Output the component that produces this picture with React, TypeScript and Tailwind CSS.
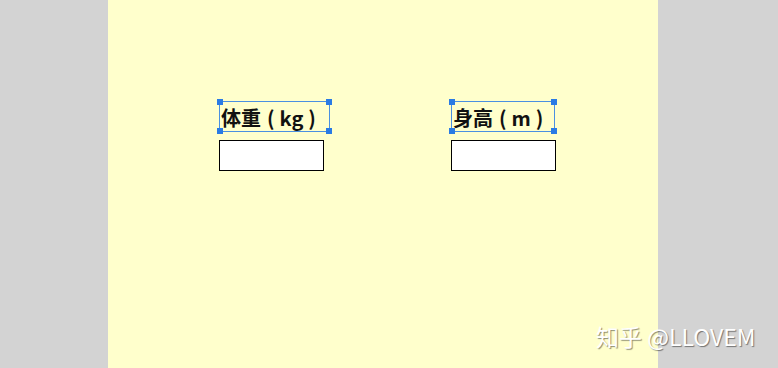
const handle = "absolute h-[6px] w-[6px] bg-[#2a7be4]"

function Field({ name, unit, labelWidth }: { name: string; unit: string; labelWidth: string }) {
  return (
    <div className="flex flex-col items-start gap-[8px]">
      <div className={`relative flex h-[31px] items-center border border-[#4a90e2] pl-[1px] pt-[2px] ${labelWidth}`}>
        <span className="flex items-center whitespace-nowrap text-[20px] font-bold leading-none text-[#111]">
          {name}
          <span className="ml-[6px] mr-[5px]">(</span>
          {unit}
          <span className="ml-[5px]">)</span>
        </span>
        <span className={`${handle} -left-[3px] -top-[3px]`} />
        <span className={`${handle} -right-[3px] -top-[3px]`} />
        <span className={`${handle} -bottom-[3px] -left-[3px]`} />
        <span className={`${handle} -bottom-[3px] -right-[3px]`} />
      </div>
      <div className="h-[31px] w-[105px] border border-black bg-white" />
    </div>
  )
}

export default function App() {
  return (
    <div
      className="relative h-[368px] w-[778px] overflow-hidden bg-[#d3d3d3]"
      style={{ fontFamily: '"Noto Sans CJK SC", "Noto Sans", sans-serif' }}
    >
      <div className="ml-[108px] h-full w-[550px] bg-[#ffffcc] pt-[101px]">
        <div className="ml-[111px] flex gap-[121px]">
          <Field name="体重" unit="kg" labelWidth="w-[111px]" />
          <Field name="身高" unit="m" labelWidth="w-[104px]" />
        </div>
      </div>
      <div className="absolute left-[596px] top-[319px] whitespace-nowrap text-[23px] text-white [text-shadow:1px_1px_1px_rgba(0,0,0,0.45)]">
        知乎 @LLOVEM
      </div>
    </div>
  )
}
